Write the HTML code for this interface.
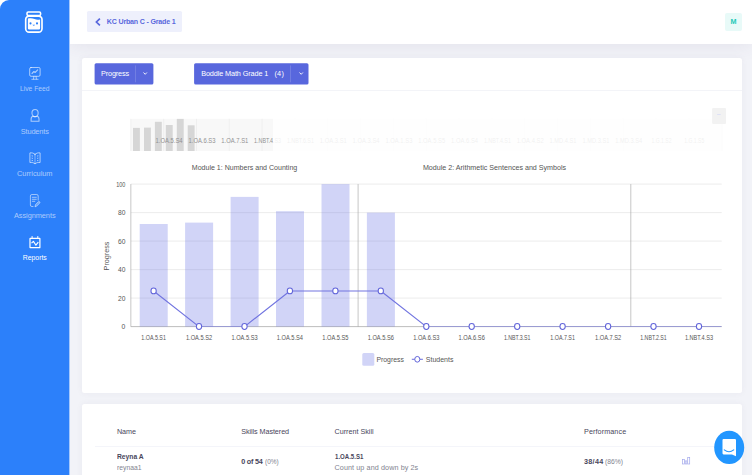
<!DOCTYPE html>
<html lang="en">
<head>
<meta charset="utf-8">
<title>Reports</title>
<style>
*{box-sizing:border-box;margin:0;padding:0}
html,body{width:752px;height:475px;overflow:hidden;background:#fff}
body{font-family:"Liberation Sans",sans-serif;color:#3f4047;position:relative;font-size:7.2px;line-height:1}
.abs{position:absolute}
#page{position:absolute;left:0;top:0;width:752px;height:475px;background:#f2f3f8;overflow:hidden}
#aside{position:absolute;left:0;top:0;width:69px;height:475px;background:#2c80fa;border-top-left-radius:9px}
#corner{position:absolute;left:0;top:0;width:12px;height:12px;background:#fff}
#header{position:absolute;left:69px;top:0;width:683px;height:44px;background:#fff;box-shadow:0 0 20px rgba(82,63,105,.11)}
.nav{position:absolute;left:0;width:69.5px;text-align:center;color:rgba(255,255,255,.6);font-size:7.4px;white-space:nowrap}
.nav.on{color:#fff}
.nav svg{position:absolute;left:28.7px;top:0;width:12px;height:13px;overflow:visible}
.nav span{position:absolute;left:0;width:69.5px;top:18.2px;text-align:center}
.card{position:absolute;background:#fff;border-radius:2.5px;box-shadow:0 0 7px rgba(82,63,105,.05)}
.btn{position:absolute;color:#fff;height:20.9px;top:63.2px}
.btn .t{position:absolute;top:6.6px;white-space:nowrap;font-size:7.3px}
.btn .d{position:absolute;top:2.2px;width:0.6px;height:16.5px;background:rgba(255,255,255,.25)}
.btn svg{position:absolute;top:9.2px;width:4.4px;height:3px;overflow:visible}
.th{position:absolute;top:428.2px;font-size:7.2px;color:#48465b;white-space:nowrap}
.b{font-weight:bold;color:#48465b}
.g{color:#82838f}
</style>
</head>
<body>
<div id="page">
  <div id="header">
    <div class="abs" id="back" style="left:18px;top:11.4px;width:95.4px;height:21px;background:#eef0fc;border-radius:1.6px">
      <svg class="abs" style="left:8px;top:6.6px;width:6px;height:8px;overflow:visible" viewBox="0 0 6 8"><path d="M4.9 0.6 L1.4 4 L4.9 7.4" fill="none" stroke="#5867dd" stroke-width="1.7" stroke-linejoin="miter"/></svg>
      <span class="abs" id="backt" style="left:19.8px;top:7.5px;font-weight:bold;color:#5867dd;white-space:nowrap;font-size:7.1px;letter-spacing:-0.19px">KC Urban C - Grade 1</span>
    </div>
    <div class="abs" id="avatar" style="left:656px;top:12.6px;width:17px;height:18.4px;background:#e8faf8;border-radius:2px;color:#1dc9b7;font-weight:bold;font-size:7.2px;text-align:center;line-height:18.4px">M</div>
  </div>

  <div class="card" id="card1" style="left:81.8px;top:58px;width:659.8px;height:334.8px">
    <div class="abs" style="left:0;top:32.3px;width:659.8px;height:1px;background:#f3f4f8"></div>
  </div>
  <svg class="abs" style="left:0;top:0;width:752px;height:100px" viewBox="0 0 752 100">
    <rect x="94.6" y="63.2" width="58.8" height="21.3" rx="1.6" fill="#5867dd"/>
    <rect x="194.1" y="63.2" width="114.4" height="21.3" rx="1.6" fill="#5867dd"/>
    <rect x="135.3" y="65.4" width="0.7" height="16.9" fill="#fff" fill-opacity="0.22"/>
    <rect x="290" y="65.4" width="0.7" height="16.9" fill="#fff" fill-opacity="0.22"/>
  </svg>
  <div class="btn" id="btn1" style="left:94.5px;width:58.8px">
    <span class="t" id="btn1t" style="left:6.6px;letter-spacing:-0.17px">Progress</span>
    
    <svg style="left:48.6px" viewBox="0 0 4.4 3"><path d="M0.5 0.5 L2.2 2.3 L3.9 0.5" fill="none" stroke="#fff" stroke-width="0.9"/></svg>
  </div>
  <div class="btn" id="btn2" style="left:194.1px;width:114.3px">
    <span class="t" id="btn2t" style="left:7.1px;letter-spacing:-0.125px">Boddle Math Grade 1</span>
    <span class="t" id="btn2n" style="left:80.3px;letter-spacing:0.3px">(4)</span>
    
    <svg style="left:104.6px" viewBox="0 0 4.4 3"><path d="M0.5 0.5 L2.2 2.3 L3.9 0.5" fill="none" stroke="#fff" stroke-width="0.9"/></svg>
  </div>
  <!--CHART-->
  <svg class="abs" id="chart" style="left:0;top:0;width:752px;height:475px" viewBox="0 0 752 475" font-family="'Liberation Sans',sans-serif">
  <rect x="130.8" y="118.8" width="590.9" height="32.2" fill="#f8f8f8"/>
  <line x1="130.8" y1="118.8" x2="130.8" y2="151" stroke="#e6e6e6" stroke-width="0.5"/>
  <line x1="163.7" y1="118.8" x2="163.7" y2="151" stroke="#e6e6e6" stroke-width="0.5"/>
  <line x1="196.5" y1="118.8" x2="196.5" y2="151" stroke="#e6e6e6" stroke-width="0.5"/>
  <line x1="229.3" y1="118.8" x2="229.3" y2="151" stroke="#e6e6e6" stroke-width="0.5"/>
  <line x1="262.1" y1="118.8" x2="262.1" y2="151" stroke="#e6e6e6" stroke-width="0.5"/>
  <line x1="295.0" y1="118.8" x2="295.0" y2="151" stroke="#e6e6e6" stroke-width="0.5"/>
  <line x1="327.8" y1="118.8" x2="327.8" y2="151" stroke="#e6e6e6" stroke-width="0.5"/>
  <line x1="360.6" y1="118.8" x2="360.6" y2="151" stroke="#e6e6e6" stroke-width="0.5"/>
  <line x1="393.5" y1="118.8" x2="393.5" y2="151" stroke="#e6e6e6" stroke-width="0.5"/>
  <line x1="426.3" y1="118.8" x2="426.3" y2="151" stroke="#e6e6e6" stroke-width="0.5"/>
  <line x1="459.1" y1="118.8" x2="459.1" y2="151" stroke="#e6e6e6" stroke-width="0.5"/>
  <line x1="491.9" y1="118.8" x2="491.9" y2="151" stroke="#e6e6e6" stroke-width="0.5"/>
  <line x1="524.8" y1="118.8" x2="524.8" y2="151" stroke="#e6e6e6" stroke-width="0.5"/>
  <line x1="557.6" y1="118.8" x2="557.6" y2="151" stroke="#e6e6e6" stroke-width="0.5"/>
  <line x1="590.4" y1="118.8" x2="590.4" y2="151" stroke="#e6e6e6" stroke-width="0.5"/>
  <line x1="623.2" y1="118.8" x2="623.2" y2="151" stroke="#e6e6e6" stroke-width="0.5"/>
  <line x1="656.1" y1="118.8" x2="656.1" y2="151" stroke="#e6e6e6" stroke-width="0.5"/>
  <line x1="688.9" y1="118.8" x2="688.9" y2="151" stroke="#e6e6e6" stroke-width="0.5"/>
  <line x1="721.7" y1="118.8" x2="721.7" y2="151" stroke="#e6e6e6" stroke-width="0.5"/>
  <rect x="133.0" y="127.9" width="6.9" height="23.1" fill="#d6d6d6"/>
  <rect x="144.0" y="127.6" width="6.9" height="23.4" fill="#d6d6d6"/>
  <rect x="154.9" y="121.8" width="6.9" height="29.2" fill="#d6d6d6"/>
  <rect x="165.8" y="125.0" width="6.9" height="26.0" fill="#d6d6d6"/>
  <rect x="176.8" y="118.9" width="6.9" height="32.1" fill="#d6d6d6"/>
  <rect x="187.7" y="125.3" width="6.9" height="25.7" fill="#d6d6d6"/>
  <text x="169.1" y="143.2" font-size="7" fill="#929292" text-anchor="middle" textLength="27" lengthAdjust="spacingAndGlyphs">1.OA.5.S4</text>
  <text x="202.0" y="143.2" font-size="7" fill="#929292" text-anchor="middle" textLength="27" lengthAdjust="spacingAndGlyphs">1.OA.6.S3</text>
  <text x="234.8" y="143.2" font-size="7" fill="#929292" text-anchor="middle" textLength="27" lengthAdjust="spacingAndGlyphs">1.OA.7.S1</text>
  <text x="267.6" y="143.2" font-size="7" fill="#929292" text-anchor="middle" textLength="27" lengthAdjust="spacingAndGlyphs">1.NBT.4.S3</text>
  <text x="300.4" y="143.2" font-size="7" fill="#929292" text-anchor="middle" textLength="27" lengthAdjust="spacingAndGlyphs">1.NBT.6.S1</text>
  <text x="333.3" y="143.2" font-size="7" fill="#929292" text-anchor="middle" textLength="27" lengthAdjust="spacingAndGlyphs">1.OA.3.S1</text>
  <text x="366.1" y="143.2" font-size="7" fill="#929292" text-anchor="middle" textLength="27" lengthAdjust="spacingAndGlyphs">1.OA.3.S4</text>
  <text x="398.9" y="143.2" font-size="7" fill="#929292" text-anchor="middle" textLength="27" lengthAdjust="spacingAndGlyphs">1.OA.1.S3</text>
  <text x="431.7" y="143.2" font-size="7" fill="#929292" text-anchor="middle" textLength="27" lengthAdjust="spacingAndGlyphs">1.OA.5.S5</text>
  <text x="464.6" y="143.2" font-size="7" fill="#929292" text-anchor="middle" textLength="27" lengthAdjust="spacingAndGlyphs">1.OA.6.S4</text>
  <text x="497.4" y="143.2" font-size="7" fill="#929292" text-anchor="middle" textLength="27" lengthAdjust="spacingAndGlyphs">1.NBT.4.S1</text>
  <text x="530.2" y="143.2" font-size="7" fill="#929292" text-anchor="middle" textLength="27" lengthAdjust="spacingAndGlyphs">1.OA.4.S2</text>
  <text x="563.0" y="143.2" font-size="7" fill="#929292" text-anchor="middle" textLength="27" lengthAdjust="spacingAndGlyphs">1.MD.4.S1</text>
  <text x="595.9" y="143.2" font-size="7" fill="#929292" text-anchor="middle" textLength="27" lengthAdjust="spacingAndGlyphs">1.MD.3.S1</text>
  <text x="628.7" y="143.2" font-size="7" fill="#929292" text-anchor="middle" textLength="27" lengthAdjust="spacingAndGlyphs">1.MD.3.S4</text>
  <text x="661.5" y="143.2" font-size="7" fill="#929292" text-anchor="middle" textLength="20" lengthAdjust="spacingAndGlyphs">1.G.1.S2</text>
  <text x="694.3" y="143.2" font-size="7" fill="#929292" text-anchor="middle" textLength="20" lengthAdjust="spacingAndGlyphs">1.G.1.S5</text>
  <rect x="273.1" y="118.3" width="449.1" height="33.2" fill="#fff" fill-opacity="0.86"/>
  <rect x="712.1" y="108.1" width="13.9" height="15.9" rx="1" fill="#f2f2f2"/>
  <rect x="717.1" y="114.1" width="3.6" height="0.9" fill="#dcdff6"/>
  <text id="mt1" x="244.5" y="170.1" font-size="7.5" fill="#555" text-anchor="middle" textLength="105.5" lengthAdjust="spacingAndGlyphs">Module 1: Numbers and Counting</text>
  <text id="mt2" x="494.5" y="170.1" font-size="7.5" fill="#555" text-anchor="middle" textLength="143.2" lengthAdjust="spacingAndGlyphs">Module 2: Arithmetic Sentences and Symbols</text>
  <line x1="130.85" y1="326.6" x2="721.7" y2="326.6" stroke="#e4e4e4" stroke-width="0.7"/>
  <text x="125.4" y="329.3" font-size="7.4" fill="#555" text-anchor="end" textLength="3.8" lengthAdjust="spacingAndGlyphs">0</text>
  <line x1="130.85" y1="298.1" x2="721.7" y2="298.1" stroke="#e4e4e4" stroke-width="0.7"/>
  <text x="125.4" y="300.8" font-size="7.4" fill="#555" text-anchor="end" textLength="7.4" lengthAdjust="spacingAndGlyphs">20</text>
  <line x1="130.85" y1="269.6" x2="721.7" y2="269.6" stroke="#e4e4e4" stroke-width="0.7"/>
  <text x="125.4" y="272.3" font-size="7.4" fill="#555" text-anchor="end" textLength="7.4" lengthAdjust="spacingAndGlyphs">40</text>
  <line x1="130.85" y1="241.1" x2="721.7" y2="241.1" stroke="#e4e4e4" stroke-width="0.7"/>
  <text x="125.4" y="243.8" font-size="7.4" fill="#555" text-anchor="end" textLength="7.4" lengthAdjust="spacingAndGlyphs">60</text>
  <line x1="130.85" y1="212.6" x2="721.7" y2="212.6" stroke="#e4e4e4" stroke-width="0.7"/>
  <text x="125.4" y="215.3" font-size="7.4" fill="#555" text-anchor="end" textLength="7.4" lengthAdjust="spacingAndGlyphs">80</text>
  <line x1="130.85" y1="184.1" x2="721.7" y2="184.1" stroke="#e4e4e4" stroke-width="0.7"/>
  <text x="125.4" y="186.8" font-size="7.4" fill="#555" text-anchor="end" textLength="9.2" lengthAdjust="spacingAndGlyphs">100</text>
  <line x1="130.85" y1="184.1" x2="130.85" y2="326.6" stroke="#a0a0a0" stroke-width="0.6"/>
  <line x1="130.85" y1="326.6" x2="721.7" y2="326.6" stroke="#a0a0a0" stroke-width="0.6"/>
  <text id="ytitle" x="0" y="0" font-size="7.2" fill="#555" text-anchor="middle" transform="translate(109.4 256) rotate(-90)">Progress</text>
  <rect x="139.7" y="224.0" width="28" height="102.6" fill="#6771e4" fill-opacity="0.3"/>
  <rect x="185.1" y="222.6" width="28" height="104.0" fill="#6771e4" fill-opacity="0.3"/>
  <rect x="230.6" y="196.9" width="28" height="129.7" fill="#6771e4" fill-opacity="0.3"/>
  <rect x="276.0" y="211.2" width="28" height="115.4" fill="#6771e4" fill-opacity="0.3"/>
  <rect x="321.5" y="184.1" width="28" height="142.5" fill="#6771e4" fill-opacity="0.3"/>
  <rect x="366.9" y="212.6" width="28" height="114.0" fill="#6771e4" fill-opacity="0.3"/>
  <line x1="358.1" y1="184.1" x2="358.1" y2="326.6" stroke="#a0a0a0" stroke-width="0.6"/>
  <line x1="630.8" y1="184.1" x2="630.8" y2="326.6" stroke="#a0a0a0" stroke-width="0.6"/>
  <clipPath id="plotclip"><rect x="130.85" y="181.1" width="590.9" height="145.45"/></clipPath>
  <polyline points="153.6,291.0 199.0,326.6 244.5,326.6 289.9,291.0 335.4,291.0 380.8,291.0 426.3,326.6 471.7,326.6 517.2,326.6 562.6,326.6 608.1,326.6 653.5,326.6 699.0,326.6 721.7,326.6" fill="none" stroke="#7275e0" stroke-width="1.15" stroke-linejoin="round" clip-path="url(#plotclip)"/>
  <ellipse cx="153.6" cy="290.9" rx="2.65" ry="2.95" fill="#fff" stroke="#6265da" stroke-width="1.05"/>
  <ellipse cx="199.0" cy="326.5" rx="2.65" ry="2.95" fill="#fff" stroke="#6265da" stroke-width="1.05"/>
  <ellipse cx="244.5" cy="326.5" rx="2.65" ry="2.95" fill="#fff" stroke="#6265da" stroke-width="1.05"/>
  <ellipse cx="289.9" cy="290.9" rx="2.65" ry="2.95" fill="#fff" stroke="#6265da" stroke-width="1.05"/>
  <ellipse cx="335.4" cy="290.9" rx="2.65" ry="2.95" fill="#fff" stroke="#6265da" stroke-width="1.05"/>
  <ellipse cx="380.8" cy="290.9" rx="2.65" ry="2.95" fill="#fff" stroke="#6265da" stroke-width="1.05"/>
  <ellipse cx="426.3" cy="326.5" rx="2.65" ry="2.95" fill="#fff" stroke="#6265da" stroke-width="1.05"/>
  <ellipse cx="471.7" cy="326.5" rx="2.65" ry="2.95" fill="#fff" stroke="#6265da" stroke-width="1.05"/>
  <ellipse cx="517.2" cy="326.5" rx="2.65" ry="2.95" fill="#fff" stroke="#6265da" stroke-width="1.05"/>
  <ellipse cx="562.6" cy="326.5" rx="2.65" ry="2.95" fill="#fff" stroke="#6265da" stroke-width="1.05"/>
  <ellipse cx="608.1" cy="326.5" rx="2.65" ry="2.95" fill="#fff" stroke="#6265da" stroke-width="1.05"/>
  <ellipse cx="653.5" cy="326.5" rx="2.65" ry="2.95" fill="#fff" stroke="#6265da" stroke-width="1.05"/>
  <ellipse cx="699.0" cy="326.5" rx="2.65" ry="2.95" fill="#fff" stroke="#6265da" stroke-width="1.05"/>
  <text x="153.6" y="339.8" font-size="7.5" fill="#555" text-anchor="middle" textLength="24.6" lengthAdjust="spacingAndGlyphs">1.OA.5.S1</text>
  <text x="199.0" y="339.8" font-size="7.5" fill="#555" text-anchor="middle" textLength="26.2" lengthAdjust="spacingAndGlyphs">1.OA.5.S2</text>
  <text x="244.5" y="339.8" font-size="7.5" fill="#555" text-anchor="middle" textLength="26.2" lengthAdjust="spacingAndGlyphs">1.OA.5.S3</text>
  <text x="289.9" y="339.8" font-size="7.5" fill="#555" text-anchor="middle" textLength="26.2" lengthAdjust="spacingAndGlyphs">1.OA.5.S4</text>
  <text x="335.4" y="339.8" font-size="7.5" fill="#555" text-anchor="middle" textLength="26.2" lengthAdjust="spacingAndGlyphs">1.OA.5.S5</text>
  <text x="380.8" y="339.8" font-size="7.5" fill="#555" text-anchor="middle" textLength="26.2" lengthAdjust="spacingAndGlyphs">1.OA.5.S6</text>
  <text x="426.3" y="339.8" font-size="7.5" fill="#555" text-anchor="middle" textLength="26.2" lengthAdjust="spacingAndGlyphs">1.OA.6.S3</text>
  <text x="471.7" y="339.8" font-size="7.5" fill="#555" text-anchor="middle" textLength="26.2" lengthAdjust="spacingAndGlyphs">1.OA.6.S6</text>
  <text x="517.2" y="339.8" font-size="7.5" fill="#555" text-anchor="middle" textLength="26.5" lengthAdjust="spacingAndGlyphs">1.NBT.3.S1</text>
  <text x="562.6" y="339.8" font-size="7.5" fill="#555" text-anchor="middle" textLength="24.6" lengthAdjust="spacingAndGlyphs">1.OA.7.S1</text>
  <text x="608.1" y="339.8" font-size="7.5" fill="#555" text-anchor="middle" textLength="26.2" lengthAdjust="spacingAndGlyphs">1.OA.7.S2</text>
  <text x="653.5" y="339.8" font-size="7.5" fill="#555" text-anchor="middle" textLength="26.5" lengthAdjust="spacingAndGlyphs">1.NBT.2.S1</text>
  <text x="699.0" y="339.8" font-size="7.5" fill="#555" text-anchor="middle" textLength="28.2" lengthAdjust="spacingAndGlyphs">1.NBT.4.S3</text>
  <rect x="362.3" y="352.9" width="12" height="12.8" rx="1.5" fill="#6771e4" fill-opacity="0.3"/>
  <text id="lg1" x="376.4" y="362" font-size="7.6" fill="#555" textLength="27.5" lengthAdjust="spacingAndGlyphs">Progress</text>
  <line x1="411.8" y1="359.3" x2="422.9" y2="359.3" stroke="#7679e0" stroke-width="1.1"/>
  <ellipse cx="417.3" cy="359.3" rx="2.55" ry="2.85" fill="#fff" stroke="#6265da" stroke-width="1"/>
  <text id="lg2" x="425.8" y="362" font-size="7.6" fill="#555" textLength="27.6" lengthAdjust="spacingAndGlyphs">Students</text>
  </svg>
  <!--/CHART-->
  <div class="card" id="card2" style="left:81.8px;top:403.9px;width:659.8px;height:90px">
    <div class="abs" style="left:12.8px;top:42.2px;width:634px;height:1px;background:#f4f5fa"></div>
  </div>
  <span class="th" id="th1" style="left:116.9px">Name</span>
  <span class="th" id="th2" style="left:241.2px;letter-spacing:-0.06px">Skills Mastered</span>
  <span class="th" id="th3" style="left:334.5px">Current Skill</span>
  <span class="th" id="th4" style="left:584px;letter-spacing:0.1px">Performance</span>
  <span class="abs b" id="r1a" style="left:116.9px;top:453.4px;white-space:nowrap;transform:scaleX(0.934);transform-origin:0 0">Reyna A</span>
  <span class="abs g" id="r1b" style="left:116.9px;top:463.6px;white-space:nowrap;transform:scaleX(0.94);transform-origin:0 0">reynaa1</span>
  <span class="abs" id="r2" style="left:241.2px;top:458.4px;white-space:nowrap"><span class="b" style="letter-spacing:-0.2px">0 of 54</span><span class="g" style="display:inline-block;font-size:7.8px;margin-left:2px;transform:scaleX(0.835);transform-origin:0 50%">(0%)</span></span>
  <span class="abs b" id="r3a" style="left:334.5px;top:453.2px;white-space:nowrap;transform:scaleX(0.845);transform-origin:0 0">1.OA.5.S1</span>
  <span class="abs g" id="r3b" style="left:334.5px;top:463.8px;white-space:nowrap;letter-spacing:0.1px">Count up and down by 2s</span>
  <span class="abs" id="r4" style="left:584px;top:458.4px;white-space:nowrap"><span class="b" style="letter-spacing:0.3px">38/44</span><span class="g" style="display:inline-block;font-size:7.8px;margin-left:1.9px;transform:scaleX(0.865);transform-origin:0 50%">(86%)</span></span>
  <svg class="abs" style="left:682px;top:457.3px;width:8.4px;height:7.6px;overflow:visible" viewBox="0 0 8.4 7.6"><g fill="none" stroke="#a3a9ec" stroke-width="0.7"><rect x="0.5" y="2.6" width="1.9" height="4.4"/><rect x="3.2" y="3.9" width="1.7" height="3.1"/><rect x="5.7" y="0.5" width="2" height="6.5"/></g></svg>
  <svg class="abs" id="intercom" style="left:713px;top:429px;width:33px;height:37px;overflow:visible" viewBox="713 429 33 37">
    <ellipse cx="729.2" cy="447.4" rx="15" ry="16.6" fill="#2296ff"/>
    <path d="M723.6 438.9 L734.9 438.9 Q736 438.9 736 440 L736 456.2 L732 454.4 L723.6 454.4 Q722.5 454.4 722.5 453.3 L722.5 440 Q722.5 438.9 723.6 438.9 Z" fill="#fff"/>
    <path d="M724.3 449.9 Q729 453.6 733.7 449.9" fill="none" stroke="#2296ff" stroke-width="1.2" stroke-linecap="round"/>
  </svg>
  <div class="abs" style="left:69px;top:0;width:1px;height:475px;background:#a4c8fd"></div>
  <div id="corner"></div>
  <div id="aside">
    <svg class="abs" style="left:24px;top:10px;width:20px;height:24px;overflow:visible" viewBox="24 10 20 24">
      <rect x="27" y="12" width="13.6" height="3.5" rx="1.2" fill="none" stroke="#fff" stroke-width="1.55"/>
      <rect x="25.7" y="16.1" width="16.3" height="16" rx="3.4" fill="none" stroke="#fff" stroke-width="1.65"/>
      <path d="M27.9 18.6 C30.5 17.9 32.5 18.2 34.5 19.1 C36.6 20 38.3 19.9 40.1 19.4 L40.1 28.2 Q40.1 29.4 38.9 29.4 L29.1 29.4 Q27.9 29.4 27.9 28.2 Z" fill="#fff"/>
      <circle cx="30.5" cy="23.4" r="1.05" fill="#2c80fa"/>
      <circle cx="37" cy="23.4" r="1.05" fill="#2c80fa"/>
      <path d="M32.5 24.7 Q33.75 27 35 24.7 Z" fill="#2c80fa"/>
    </svg>
    <div class="nav" style="top:67.2px">
      <svg viewBox="0 0 12 13"><g fill="none" stroke="currentColor" stroke-width="0.9" stroke-linecap="round" stroke-linejoin="round"><rect x="0.7" y="0.5" width="10.4" height="8.8" rx="1.3" stroke-width="1"/><path d="M3 6.5 L4.9 4.5 L6.1 5.5 L8.7 2.9" stroke-width="1.1"/><path d="M4.9 9.3 L4.5 12 M7 9.3 L7.4 12 M2.8 12.3 L9.1 12.3"/></g></svg>
      <span style="transform:scaleX(0.905)">Live Feed</span>
    </div>
    <div class="nav" style="top:109.4px">
      <svg viewBox="0 0 12 13"><g fill="none" stroke="currentColor" stroke-width="1.05" stroke-linejoin="round"><ellipse cx="6.05" cy="4" rx="3.1" ry="3.6"/><path d="M2.1 12.2 L2.1 10 Q2.1 7.5 4.2 7.2 Q6 8.2 7.9 7.2 Q10 7.5 10 10 L10 12.2 Z"/></g></svg>
      <span style="letter-spacing:-0.13px">Students</span>
    </div>
    <div class="nav" style="top:151.8px">
      <svg viewBox="0 0 12 13"><g fill="none" stroke="currentColor" stroke-width="1" stroke-linejoin="round" stroke-linecap="round"><path d="M6 2.3 C4.6 1 2.6 0.6 0.9 0.9 L0.9 10.5 C2.6 10.2 4.6 10.6 6 11.8 C7.4 10.6 9.4 10.2 11.1 10.5 L11.1 0.9 C9.4 0.6 7.4 1 6 2.3 Z"/><path d="M6 2.3 L6 11.8" stroke-width="0.7"/><path d="M2.6 3.8 L4 4.1 M2.6 6.1 L4 6.4 M2.6 8.4 L4 8.7 M8 4.1 L9.4 3.8 M8 6.4 L9.4 6.1 M8 8.7 L9.4 8.4" stroke-width="0.95" stroke-linecap="butt"/></g></svg>
      <span style="letter-spacing:-0.03px">Curriculum</span>
    </div>
    <div class="nav" style="top:193.8px">
      <svg viewBox="0 0 12 13"><g fill="none" stroke="currentColor" stroke-width="0.9" stroke-linejoin="round" stroke-linecap="round"><path d="M9.2 6.2 L9.2 2 Q9.2 0.5 7.7 0.5 L2.9 0.5 Q1.4 0.5 1.4 2 L1.4 11 Q1.4 12.5 2.9 12.5 L4 12.5"/><path d="M3.3 3.3 L7.3 3.3 M3.3 5.3 L7.3 5.3 M3.3 7.3 L5.8 7.3" stroke-width="0.9"/><path d="M6.1 12.4 L6.5 10.7 L9.3 7.8 Q10 7.2 10.6 7.8 Q11.2 8.4 10.6 9.1 L7.8 12 Z" fill="currentColor" fill-opacity="0.45" stroke-width="0.85"/></g></svg>
      <span style="letter-spacing:-0.07px">Assignments</span>
    </div>
    <div class="nav on" style="top:236.2px">
      <svg viewBox="0 0 12 13"><g fill="none" stroke="currentColor" stroke-width="1.2" stroke-linejoin="miter" stroke-linecap="butt"><rect x="1" y="2.3" width="9.9" height="9.4" rx="0.3"/><path d="M3.1 0.1 L3.1 2.6 M8.8 0.1 L8.8 2.6" stroke-width="1"/><path d="M2.5 7.2 L4.4 5.3 L6.9 9.2 L9.3 6.2" stroke-width="1.15" stroke-linejoin="round"/></g></svg>
      <span style="transform:scaleX(0.932)">Reports</span>
    </div>
  </div>
</div>
</body>
</html>
